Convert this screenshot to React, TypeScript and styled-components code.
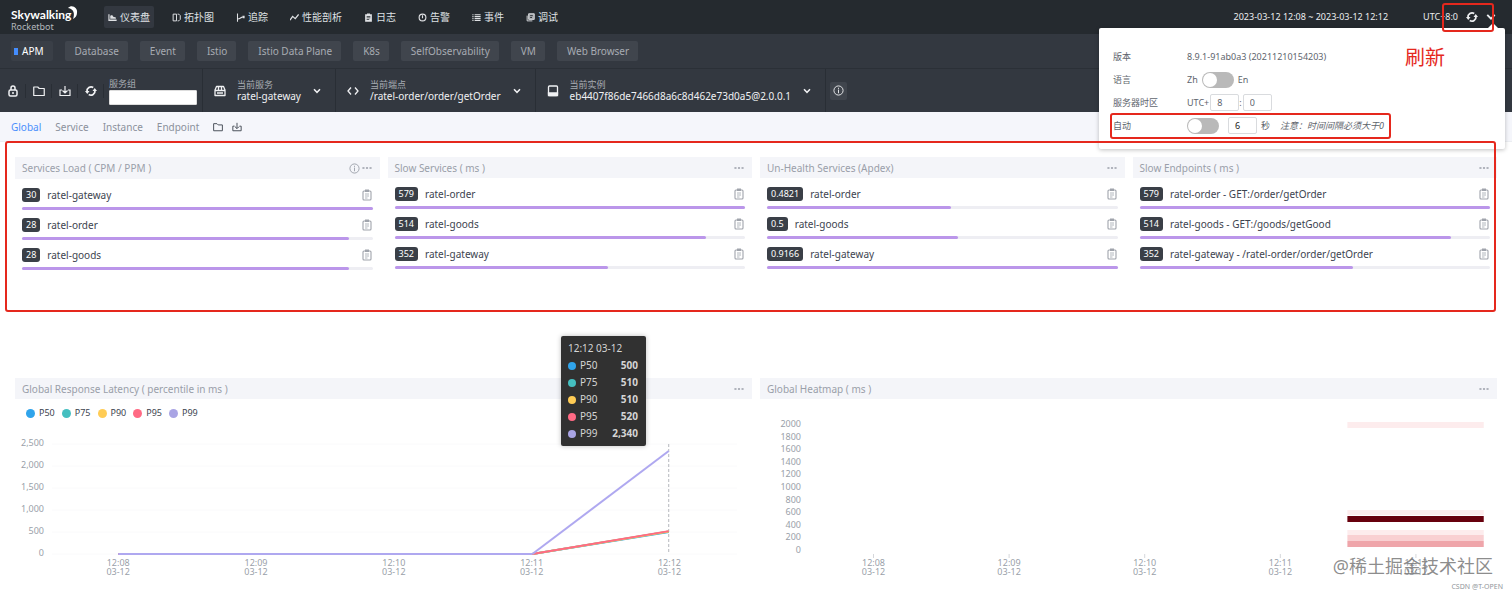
import React from "react";
import styled, { createGlobalStyle, css } from "styled-components";

const GlobalStyle = createGlobalStyle`
  *, *::before, *::after { box-sizing: border-box; }
  body {
    margin: 0;
    background: #fff;
    font-family: "Noto Sans", "Noto Sans CJK SC", sans-serif;
    font-size: 10px;
    line-height: 14px;
    color: #3d444f;
  }
  button, input { font: inherit; color: inherit; margin: 0; }
  button { border: 0; padding: 0; background: none; cursor: pointer; }
  ul { list-style: none; margin: 0; padding: 0; }
  h2 { font: inherit; margin: 0; }
`;

/* ---------- icons ---------- */

const Svg = styled.svg<{ $size: number }>`
  width: ${(p) => p.$size}px;
  height: ${(p) => p.$size}px;
  flex: none;
  display: block;
`;

type IconName =
  | "chart" | "topology" | "trace" | "trend" | "clipboard" | "alarm" | "list" | "debug"
  | "lock" | "folder" | "download" | "refresh" | "package" | "code" | "disk" | "info" | "chevron" | "dots";

const shapes: Record<IconName, React.ReactNode> = {
  chart: <path d="M1 3h3v14h19v4H1zM6 15V7l5-2 3 5 7 2v3z" fill="currentColor" />,
  topology: (
    <g fill="none" stroke="currentColor" strokeWidth="2.6">
      <path d="M3 3h9v18H3zM15 3h3l4 4v10l-4 4h-3" />
    </g>
  ),
  trace: (
    <g fill="none" stroke="currentColor" strokeWidth="2.8">
      <path d="M4 1v22M4 16c9 0 7-5 14-5" />
      <path d="M17 7h6v7h-5z" fill="currentColor" stroke="none" />
    </g>
  ),
  trend: <path d="M0 19 7 9l7 6 9-11" fill="none" stroke="currentColor" strokeWidth="3.400" />,
  clipboard: (
    <path
      fillRule="evenodd"
      fill="currentColor"
      d="M8 1h8v2h5v20H3V3h5zM7 8v2h10V8zm0 4v2h10v-2zm0 4v2h7v-2z"
    />
  ),
  alarm: (
    <g fill="none" stroke="currentColor" strokeWidth="3">
      <circle cx="12" cy="12" r="9" />
      <path d="M12 6v8" />
    </g>
  ),
  list: <path d="M1 3h3v3H1zM7 3h16v3H7zM1 8h3v3H1zM7 8h16v3H7zM1 13h3v3H1zM7 13h16v3H7zM1 18h3v3H1zM7 18h16v3H7z" fill="currentColor" />,
  debug: (
    <g fill="none" stroke="currentColor" strokeWidth="2.4">
      <path d="M7 2h15v15H7z" fill="currentColor" fillOpacity="0.7" />
      <path d="M3 7v14h14" />
      <path d="M11 7h7M11 12h5" stroke="#252a2f" />
    </g>
  ),
  lock: (
    <g fill="none" stroke="currentColor" strokeWidth="3">
      <rect x="4" y="10" width="16" height="12" rx="3" />
      <path d="M8 10V6a4 4 0 0 1 8 0v4M12 14v4" />
    </g>
  ),
  folder: <path d="M1.500 4h8l3 3h10v14h-21z" fill="none" stroke="currentColor" strokeWidth="2.4" strokeLinejoin="round" />,
  download: (
    <path
      d="M6 10H2v11h20V10h-4M12 2v13M7 11l5 5 5-5"
      fill="none"
      stroke="currentColor"
      strokeWidth="2.4"
    />
  ),
  refresh: (
    <g>
      <path d="M4 13A8.300 8.300 0 0 1 16.500 5M20 11A8.300 8.300 0 0 1 7.500 19" fill="none" stroke="currentColor" strokeWidth="3.400" />
      <path d="M0 12h9l-4.500 6zM15 12h9l-4.500-6z" fill="currentColor" />
    </g>
  ),
  package: (
    <g fill="none" stroke="currentColor" strokeWidth="2.6" strokeLinejoin="round">
      <path d="M2 10l3-7h14l3 7v11H2zM2 11h20M9 4v6M15 4v6" />
      <path d="M6 16h12" strokeWidth="3" />
    </g>
  ),
  code: <path d="M8 5l-6 7 6 7M16 5l6 7-6 7" fill="none" stroke="currentColor" strokeWidth="2.6" />,
  disk: (
    <g fill="none" stroke="currentColor" strokeWidth="2.6">
      <rect x="3" y="2" width="18" height="19" rx="2" />
      <path d="M3 16h18v5H3z" fill="currentColor" />
    </g>
  ),
  info: (
    <g fill="none" stroke="currentColor" strokeWidth="2">
      <circle cx="12" cy="12" r="10" />
      <path d="M12 10v8M12 6v2.500" />
    </g>
  ),
  chevron: <path d="M3 7l9 9 9-9" fill="none" stroke="currentColor" strokeWidth="4.500" />,
  dots: <path d="M1 10h5v4H1zM9.500 10h5v4h-5zM18 10h5v4h-5z" fill="currentColor" />,
};

const Icon = ({ name, size = 12 }: { name: IconName; size?: number }) => (
  <Svg $size={size} viewBox="0 0 24 24" aria-hidden="true">
    {shapes[name]}
  </Svg>
);

/* ---------- header ---------- */

const Page = styled.div`
  position: relative;
  min-height: 100vh;
  overflow: hidden;
`;

const Header = styled.header`
  display: flex;
  align-items: center;
  height: 34px;
  padding: 0 16px 0 11px;
  background: #252a2f;
  color: #dfe1e4;
`;

const Brand = styled.div`
  width: 93px;
  flex: none;
`;

const Logo = styled.svg`
  display: block;
  width: 70px;
  height: 28px;
  overflow: visible;
`;

const TopNav = styled.nav`
  display: flex;
  gap: 14px;
  flex: 1;
`;

const TopLink = styled.a<{ $active?: boolean }>`
  display: flex;
  align-items: center;
  gap: 3px;
  height: 22px;
  padding: 0 4px;
  border-radius: 2px;
  color: inherit;
  text-decoration: none;
  white-space: nowrap;
  background: ${(p) => (p.$active ? "#333840" : "transparent")};
`;

const HeaderTools = styled.div`
  display: flex;
  align-items: center;
  color: #eceef0;
  font-size: 9px;
  white-space: nowrap;
`;

const DateRange = styled.button`
  margin-right: 35px;
`;

const ToolButton = styled.button`
  margin-left: 8px;
`;

const Pills = styled.nav`
  display: flex;
  align-items: center;
  gap: 12px;
  height: 35px;
  padding: 0 11px;
  background: #333840;
  border-bottom: 1px solid #2b3037;
`;

const Pill = styled.a<{ $active?: boolean }>`
  display: flex;
  align-items: center;
  height: 20px;
  padding: 0 9px 0 10px;
  border-radius: 2px;
  background: #40454d;
  color: #a7abb2;
  text-decoration: none;
  white-space: nowrap;
  ${(p) =>
    p.$active &&
    css`
      padding-left: 3px;
      background: #3a3f47;
      color: #fff;
      &::before {
        content: "";
        width: 4px;
        height: 7px;
        margin-right: 4px;
        background: #448dfe;
      }
    `}
`;

/* ---------- selector toolbar ---------- */

const Toolbar = styled.div`
  display: flex;
  height: 43px;
  background: #333840;
  color: #f0f1f3;
`;

const Divided = css`
  border-right: 1px solid #292e35;
`;

const ToolIcon = styled.button`
  display: flex;
  align-items: center;
  justify-content: center;
  width: 26px;
  position: relative;
  &::after {
    content: "";
    position: absolute;
    right: 0;
    top: 15px;
    height: 14px;
    border-right: 1px solid #292e35;
  }
`;

const Group = styled.label`
  display: flex;
  flex-direction: column;
  width: 99px;
  padding: 8px 5px 0;
  font-size: 9px;
  line-height: 13px;
  color: #a7abb2;
  ${Divided}
`;

const GroupInput = styled.input`
  width: 100%;
  height: 15px;
  border: 1px solid #ddd;
  border-radius: 1px;
  background: #fff;
`;

const Selector = styled.button`
  display: flex;
  align-items: center;
  padding: 0 14px 0 11px;
  text-align: left;
  white-space: nowrap;
  ${Divided}
`;

const SelectorText = styled.span`
  display: flex;
  flex-direction: column;
  margin: 0 12px 0 11px;
  padding-bottom: 1px;
  line-height: 12px;
`;

const SelectorLabel = styled.span`
  font-size: 9px;
  line-height: 11px;
  color: #a7abb2;
`;

const InfoButton = styled.button`
  display: flex;
  align-items: center;
  justify-content: center;
  align-self: center;
  width: 17px;
  height: 18px;
  margin-left: 4px;
  border-radius: 2px;
  background: #40454d;
`;

const Tabs = styled.nav`
  display: flex;
  align-items: center;
  gap: 14px;
  height: 30px;
  padding: 0 11px;
  background: #f5f6fb;
  border-bottom: 1px solid #eceef2;
`;

const Tab = styled.a<{ $active?: boolean }>`
  color: ${(p) => (p.$active ? "#4b8ffb" : "#8b919c")};
  text-decoration: none;
`;

const TabTools = styled.div`
  display: flex;
  gap: 9px;
  color: #4d535d;
`;

/* ---------- dashboard ---------- */

const Board = styled.main`
  display: grid;
  grid-template-columns: repeat(4, 1fr);
  grid-template-rows: 213px auto;
  gap: 8px;
  padding: 15px 15px 0;
`;

const Panel = styled.section<{ $span?: number }>`
  grid-column: span ${(p) => p.$span ?? 1};
  min-width: 0;
`;

const PanelHead = styled.div<{ $tall?: boolean }>`
  display: flex;
  align-items: center;
  gap: 2px;
  height: ${(p) => (p.$tall ? 22 : 21)}px;
  padding: 0 8px 0 7px;
  background: #f4f5f9;
  color: #9a9fa9;
`;

const PanelTitle = styled.h2`
  flex: 1;
`;

const RankList = styled.ul`
  padding: 6px 7px 0;
`;

const RankItem = styled.li`
  height: 30px;
`;

const RankRow = styled.div`
  display: flex;
  align-items: center;
  gap: 7px;
  height: 20px;
`;

const Badge = styled.span`
  padding: 0 4px;
  border-radius: 3px;
  background: #3a3f47;
  color: #fff;
  font-size: 9px;
`;

const RankName = styled.span`
  flex: 1;
`;

const CopyButton = styled.button`
  color: #a0a4ac;
`;

const Track = styled.div`
  height: 3px;
  margin-top: 2px;
  border-radius: 2px;
  background: #eeeef3;
`;

const Fill = styled.div`
  height: 3px;
  border-radius: 2px;
  background: #bb96ea;
`;

const Legend = styled.ul`
  display: flex;
  gap: 7px;
  padding: 7px 11px 0;
  font-size: 9px;
`;

const LegendItem = styled.li`
  display: flex;
  align-items: center;
  gap: 4px;
`;

const Dot = styled.span<{ $color: string; $size?: number }>`
  width: ${(p) => p.$size ?? 9}px;
  height: ${(p) => p.$size ?? 9}px;
  border-radius: 50%;
  background: ${(p) => p.$color};
`;

const Chart = styled.svg<{ $height: number }>`
  display: block;
  width: 100%;
  height: ${(p) => p.$height}px;
  font-size: 9px;
  fill: #9a9fa9;
`;

const Tooltip = styled.div`
  position: absolute;
  left: 37.1%;
  top: 336px;
  width: 85px;
  padding: 4px 8px 4px 7px;
  border-radius: 2px;
  background: rgba(42, 42, 42, 0.97);
  box-shadow: 0 0 5px rgba(0, 0, 0, 0.25);
  color: #d5d5d5;
  line-height: 17px;
`;

const TooltipRow = styled.div`
  display: flex;
  align-items: center;
  gap: 4px;
`;

const TooltipValue = styled.b`
  flex: 1;
  text-align: right;
`;

/* ---------- settings popover ---------- */

const Popover = styled.div`
  position: absolute;
  top: 28px;
  right: 7px;
  width: 406px;
  height: 121px;
  padding: 17px 14px;
  border-radius: 2px;
  background: #fff;
  box-shadow: 0 1px 4px rgba(0, 0, 0, 0.25);
  color: #60656d;
  font-size: 9px;
  &::before {
    content: "";
    position: absolute;
    right: 6px;
    top: -5px;
    border: 6px solid transparent;
    border-top: 0;
    border-bottom-color: #fff;
  }
`;

const Setting = styled.div`
  display: flex;
  align-items: center;
  height: 23px;
`;

const SettingLabel = styled.span`
  width: 74px;
`;

const Switch = styled.input`
  appearance: none;
  width: 32px;
  height: 16px;
  border-radius: 8px;
  background: #b9b9b9;
  &::before {
    content: "";
    display: block;
    width: 14px;
    height: 14px;
    margin: 1px;
    border-radius: 50%;
    background: #fff;
  }
`;

const LanguageSwitch = styled(Switch)`
  margin: 0 4px;
`;

const NumberInput = styled.input`
  width: 29px;
  height: 17px;
  padding: 0 6px;
  margin-left: 1px;
  border: 1px solid #d9dbde;
  border-radius: 2px;
`;

const IntervalInput = styled(NumberInput)`
  margin: 0 4px 0 9px;
  color: #222;
`;

const Note = styled.i`
  margin-left: 10px;
`;

/* ---------- annotations ---------- */

const Mark = styled.div`
  position: absolute;
  border: 2px solid #e5281d;
  border-radius: 3px;
  pointer-events: none;
`;

const RefreshMark = styled(Mark)`
  top: 3px;
  right: 18px;
  width: 52px;
  height: 29px;
`;

const AutoMark = styled(Mark)`
  top: 113px;
  right: 121px;
  width: 281px;
  height: 26px;
`;

const ListsMark = styled(Mark)`
  top: 141px;
  left: 5px;
  right: 16px;
  height: 171px;
`;

const MarkText = styled.div`
  position: absolute;
  top: 44px;
  right: 67px;
  font-size: 20px;
  line-height: 28px;
  color: #e5281d;
`;

const Watermark = styled.div`
  position: absolute;
  top: 552px;
  right: 19px;
  font-size: 18px;
  line-height: 28px;
  color: rgba(120, 120, 120, 0.85);
`;

const Credit = styled.div`
  position: absolute;
  top: 582px;
  right: 9px;
  font-size: 7px;
  line-height: 10px;
  color: #92969b;
`;

/* ---------- data ---------- */

const topLinks: [IconName, string][] = [
  ["chart", "仪表盘"],
  ["topology", "拓扑图"],
  ["trace", "追踪"],
  ["trend", "性能剖析"],
  ["clipboard", "日志"],
  ["alarm", "告警"],
  ["list", "事件"],
  ["debug", "调试"],
];

const pills = ["APM", "Database", "Event", "Istio", "Istio Data Plane", "K8s", "SelfObservability", "VM", "Web Browser"];

const tools: [IconName, string][] = [
  ["lock", "Lock"],
  ["folder", "Open"],
  ["download", "Export"],
  ["refresh", "Reload"],
];

const selectors: [IconName, string, string][] = [
  ["package", "当前服务", "ratel-gateway"],
  ["code", "当前端点", "/ratel-order/order/getOrder"],
  ["disk", "当前实例", "eb4407f86de7466d8a6c8d462e73d0a5@2.0.0.1"],
];

type Rank = { value: number; name: string };

const rankPanels: { title: string; info?: boolean; items: Rank[] }[] = [
  {
    title: "Services Load ( CPM / PPM )",
    info: true,
    items: [
      { value: 30, name: "ratel-gateway" },
      { value: 28, name: "ratel-order" },
      { value: 28, name: "ratel-goods" },
    ],
  },
  {
    title: "Slow Services ( ms )",
    items: [
      { value: 579, name: "ratel-order" },
      { value: 514, name: "ratel-goods" },
      { value: 352, name: "ratel-gateway" },
    ],
  },
  {
    title: "Un-Health Services (Apdex)",
    items: [
      { value: 0.4821, name: "ratel-order" },
      { value: 0.5, name: "ratel-goods" },
      { value: 0.9166, name: "ratel-gateway" },
    ],
  },
  {
    title: "Slow Endpoints ( ms )",
    items: [
      { value: 579, name: "ratel-order - GET:/order/getOrder" },
      { value: 514, name: "ratel-goods - GET:/goods/getGood" },
      { value: 352, name: "ratel-gateway - /ratel-order/order/getOrder" },
    ],
  },
];

const series = [
  { name: "P50", value: 500, color: "#30a4eb" },
  { name: "P75", value: 510, color: "#45bfc0" },
  { name: "P90", value: 510, color: "#ffcc55" },
  { name: "P95", value: 520, color: "#ff6a84" },
  { name: "P99", value: 2340, color: "#a9a4e4" },
];

const times = ["12:08", "12:09", "12:10", "12:11", "12:12"];

const heatRows = [
  { y: 23, height: 6, color: "#fdeced" },
  { y: 111, height: 5, color: "#fdeced" },
  { y: 117, height: 6, color: "#67000d" },
  { y: 131, height: 5, color: "#fdeced" },
  { y: 136, height: 6, color: "#f9d0d2" },
  { y: 142, height: 6, color: "#efa5aa" },
];

/* ---------- charts ---------- */

const TimeLabels = ({ start, step, y }: { start: number; step: number; y: number }) => (
  <>
    {times.map((t, i) => (
      <React.Fragment key={t}>
        <text x={`${start + i * step}%`} y={y} textAnchor="middle">{t}</text>
        <text x={`${start + i * step}%`} y={y + 9} textAnchor="middle">03-12</text>
      </React.Fragment>
    ))}
  </>
);

const LatencyChart = () => {
  const base = 134;
  const scale = (v: number) => base - (v * 110) / 2500;
  return (
    <Chart $height={175} role="img" aria-label="Global Response Latency">
      {[0, 500, 1000, 1500, 2000, 2500].map((v) => (
        <React.Fragment key={v}>
          <line x1="5%" x2="98%" y1={scale(v)} y2={scale(v)} stroke="#fafafb" />
          <text x="29" y={scale(v) + 2} textAnchor="end">{v.toLocaleString("en-US")}</text>
        </React.Fragment>
      ))}
      <line x1="88.7%" x2="88.7%" y1="24" y2={base} stroke="#b5b8bd" strokeDasharray="3 2" />
      {series.map((s) => (
        <g key={s.name} stroke={s.name === "P99" ? "#afa8f0" : s.color} strokeWidth="2">
          <line x1="14%" x2="70.2%" y1={base} y2={base} />
          <line x1="70.2%" x2="88.7%" y1={base} y2={scale(s.value)} />
        </g>
      ))}
      <TimeLabels start={14} step={18.7} y={146} />
    </Chart>
  );
};

const HeatmapChart = () => (
  <Chart $height={196} role="img" aria-label="Global Heatmap">
    {Array.from({ length: 11 }, (_, i) => (
      <text key={i} x="41" y={154 - i * 12.6} textAnchor="end">{i * 200}</text>
    ))}
    {heatRows.map((r) => (
      <rect key={r.y} x="79.7%" width="18.5%" y={r.y} height={r.height} fill={r.color} />
    ))}
    {times.map((t, i) => (
      <line key={t} x1={`${15.4 + i * 18.4}%`} x2={`${15.4 + i * 18.4}%`} y1="155" y2="159" stroke="#d5d7db" />
    ))}
    <TimeLabels start={15.4} step={18.4} y={167} />
  </Chart>
);

const Head = ({ title, info }: { title: string; info?: boolean }) => (
  <PanelHead $tall={info}>
    <PanelTitle>{title}</PanelTitle>
    {info && <Icon name="info" size={11} />}
    <button aria-label={`${title} menu`}>
      <Icon name="dots" size={10} />
    </button>
  </PanelHead>
);

export default function App() {
  return (
    <Page>
      <GlobalStyle />
      <Header>
        <Brand>
          <Logo viewBox="0 0 70 28" role="img" aria-label="Skywalking Rocketbot">
            <text x="0" y="16" fontFamily="Lato, sans-serif" fontWeight="700" fontSize="12" fill="#fff">Skywalking</text>
            <path d="M57 5C61 1 67 5 66 10C66 13 64 15 62 16C64 11 63 6 57 5z" fill="#fff" />
            <text x="0" y="27" fontSize="9" fill="#b4b8bd">Rocketbot</text>
          </Logo>
        </Brand>
        <TopNav>
          {topLinks.map(([icon, label], i) => (
            <TopLink key={label} href="#" $active={i === 0}>
              <Icon name={icon} size={9} />
              {label}
            </TopLink>
          ))}
        </TopNav>
        <HeaderTools>
          <DateRange>2023-03-12 12:08 ~ 2023-03-12 12:12</DateRange>
          <span>UTC+8:0</span>
          <ToolButton aria-label="Refresh"><Icon name="refresh" size={12} /></ToolButton>
          <ToolButton aria-label="Settings"><Icon name="chevron" size={10} /></ToolButton>
        </HeaderTools>
      </Header>

      <Pills>
        {pills.map((p, i) => (
          <Pill key={p} href="#" $active={i === 0}>{p}</Pill>
        ))}
      </Pills>

      <Toolbar>
        {tools.map(([icon, label]) => (
          <ToolIcon key={label} aria-label={label}><Icon name={icon} size={12} /></ToolIcon>
        ))}
        <Group>
          服务组
          <GroupInput type="text" />
        </Group>
        {selectors.map(([icon, label, value]) => (
          <Selector key={label}>
            <Icon name={icon} size={12} />
            <SelectorText>
              <SelectorLabel>{label}</SelectorLabel>
              {value}
            </SelectorText>
            <Icon name="chevron" size={8} />
          </Selector>
        ))}
        <InfoButton aria-label="Info"><Icon name="info" size={11} /></InfoButton>
      </Toolbar>

      <Tabs>
        {["Global", "Service", "Instance", "Endpoint"].map((t, i) => (
          <Tab key={t} href="#" $active={i === 0}>{t}</Tab>
        ))}
        <TabTools>
          <button aria-label="Open template"><Icon name="folder" size={10} /></button>
          <button aria-label="Export template"><Icon name="download" size={10} /></button>
        </TabTools>
      </Tabs>

      <Board>
        {rankPanels.map((panel) => {
          const max = Math.max(...panel.items.map((item) => item.value));
          return (
            <Panel key={panel.title}>
              <Head title={panel.title} info={panel.info} />
              <RankList>
                {panel.items.map((item) => (
                  <RankItem key={item.name}>
                    <RankRow>
                      <Badge>{item.value}</Badge>
                      <RankName>{item.name}</RankName>
                      <CopyButton aria-label={`Copy ${item.name}`}>
                        <Svg $size={12} viewBox="0 0 24 24" aria-hidden="true">
                          <rect x="4" y="4" width="16" height="18" rx="2" fill="none" stroke="currentColor" strokeWidth="2.2" />
                          <path d="M8 1h8v5H8z" fill="currentColor" />
                          <path d="M8 10h8M8 14h8M8 18h5" fill="none" stroke="currentColor" strokeWidth="1.6" />
                        </Svg>
                      </CopyButton>
                    </RankRow>
                    <Track>
                      <Fill style={{ width: `${(item.value / max) * 100}%` }} />
                    </Track>
                  </RankItem>
                ))}
              </RankList>
            </Panel>
          );
        })}
        <Panel $span={2}>
          <Head title="Global Response Latency ( percentile in ms )" />
          <Legend>
            {series.map((s) => (
              <LegendItem key={s.name}>
                <Dot $color={s.color} />
                {s.name}
              </LegendItem>
            ))}
          </Legend>
          <LatencyChart />
        </Panel>
        <Panel $span={2}>
          <Head title="Global Heatmap ( ms )" />
          <HeatmapChart />
        </Panel>
      </Board>

      <Tooltip>
        12:12 03-12
        {series.map((s) => (
          <TooltipRow key={s.name}>
            <Dot $color={s.color} $size={8} />
            {s.name}
            <TooltipValue>{s.value.toLocaleString("en-US")}</TooltipValue>
          </TooltipRow>
        ))}
      </Tooltip>

      <Popover>
        <Setting>
          <SettingLabel>版本</SettingLabel>
          8.9.1-91ab0a3 (20211210154203)
        </Setting>
        <Setting>
          <SettingLabel>语言</SettingLabel>
          Zh
          <LanguageSwitch type="checkbox" aria-label="语言" />
          En
        </Setting>
        <Setting>
          <SettingLabel>服务器时区</SettingLabel>
          UTC+
          <NumberInput aria-label="UTC hours" defaultValue="8" />
          :
          <NumberInput aria-label="UTC minutes" defaultValue="0" />
        </Setting>
        <Setting>
          <SettingLabel>自动</SettingLabel>
          <Switch type="checkbox" aria-label="自动" />
          <IntervalInput aria-label="秒" defaultValue="6" />
          秒
          <Note>注意：时间间隔必须大于0</Note>
        </Setting>
      </Popover>

      <RefreshMark />
      <AutoMark />
      <ListsMark />
      <MarkText>刷新</MarkText>
      <Watermark>@稀土掘金技术社区</Watermark>
      <Credit>CSDN @T-OPEN</Credit>
    </Page>
  );
}
